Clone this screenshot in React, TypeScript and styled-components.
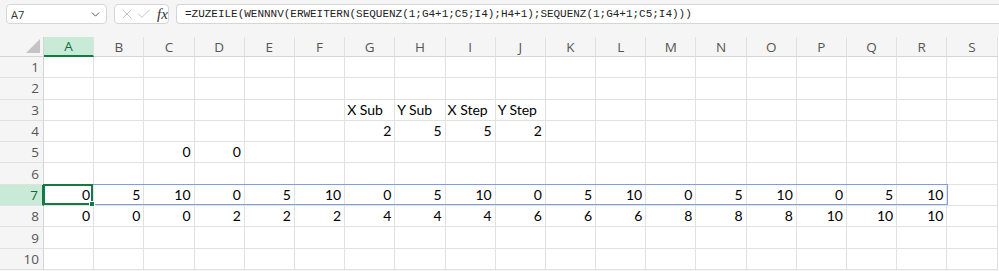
import React from 'react'
import styled, { createGlobalStyle, css } from 'styled-components'
import { X, Check, ChevronDown } from 'lucide-react'

const GlobalStyle = createGlobalStyle`
  html, body {
    margin: 0;
    padding: 0;
    background: #f5f5f5;
    overflow: hidden;
  }
`

const COLS = 'ABCDEFGHIJKLMNOPQRS'.split('')
const ROWS = [1, 2, 3, 4, 5, 6, 7, 8, 9, 10]
const COL_W = 50.2

// cell contents keyed by address
const data: Record<string, { v: string; left?: boolean }> = {
  G3: { v: 'X Sub', left: true },
  H3: { v: 'Y Sub', left: true },
  I3: { v: 'X Step', left: true },
  J3: { v: 'Y Step', left: true },
  G4: { v: '2' },
  H4: { v: '5' },
  I4: { v: '5' },
  J4: { v: '2' },
  C5: { v: '0' },
  D5: { v: '0' },
}
COLS.slice(0, 18).forEach((c, i) => {
  data[c + '7'] = { v: String((i % 3) * 5) }
  data[c + '8'] = { v: String(Math.floor(i / 3) * 2) }
})

const Page = styled.div`
  width: 999px;
  height: 271px;
  overflow: hidden;
  background: #f5f5f5;
`

const TopBar = styled.div`
  height: 37px;
  display: flex;
  align-items: flex-start;
  gap: 7px;
  padding: 4px 0 0 6px;
  box-sizing: border-box;
`

const Field = styled.div`
  height: 20px;
  box-sizing: border-box;
  border: 1px solid #d6d6d6;
  border-radius: 4px;
  background: #fff;
  display: flex;
  align-items: center;
`

const NameBox = styled(Field)`
  width: 101px;
  justify-content: space-between;
  padding: 0 4px 0 4px;
  font-family: 'Open Sans', 'Noto Sans', sans-serif;
  font-size: 11px;
  color: #333;
`

const ButtonBox = styled(Field)`
  width: 55px;
  padding: 0 0 0 4px;
  gap: 1px;
`

const FxLabel = styled.span`
  font-family: 'Liberation Serif', 'DejaVu Serif', serif;
  font-style: italic;
  font-size: 15px;
  color: #333;
  margin-left: 4px;
`

const FormulaBox = styled(Field)`
  flex: 1;
  border-right: none;
  border-radius: 4px 0 0 4px;
  padding-left: 8px;
  font-family: 'Liberation Mono', 'DejaVu Sans Mono', monospace;
  font-size: 11px;
  letter-spacing: -0.02px;
  color: #222;
  white-space: nowrap;
`

const Sheet = styled.div`
  display: grid;
  grid-template-columns: 44px repeat(19, ${COL_W}px);
  grid-template-rows: 20px repeat(10, 21.3px);
  background: #fff;
`

const Corner = styled.div`
  background: #f5f5f5;
  border-right: 1px solid #d4d4d4;
  border-bottom: 1px solid #d4d4d4;
  box-sizing: border-box;
  display: flex;
  align-items: flex-end;
  justify-content: flex-end;
  padding: 0 3px 3px 0;
`

const ColHead = styled.div<{ $active?: boolean }>`
  background: #f5f5f5;
  box-sizing: border-box;
  border-right: 1px solid #e1e1e1;
  border-bottom: 1px solid #d4d4d4;
  display: flex;
  align-items: center;
  justify-content: center;
  font-family: 'Open Sans', 'Noto Sans', sans-serif;
  font-size: 13.5px;
  color: #555;
  ${({ $active }) =>
    $active &&
    css`
      background: #caead8;
      color: #0f6b3a;
      border-bottom: 2px solid #107c41;
    `}
`

const RowHead = styled.div<{ $active?: boolean }>`
  background: #f5f5f5;
  box-sizing: border-box;
  border-right: 1px solid #d4d4d4;
  border-bottom: 1px solid #e1e1e1;
  display: flex;
  align-items: center;
  justify-content: flex-end;
  padding-right: 4px;
  font-family: 'Open Sans', 'Noto Sans', sans-serif;
  font-size: 13.5px;
  color: #555;
  ${({ $active }) =>
    $active &&
    css`
      background: #caead8;
      color: #0f6b3a;
      border-right: 2px solid #107c41;
    `}
`

const Cell = styled.div<{ $left?: boolean }>`
  position: relative;
  box-sizing: border-box;
  border-right: 1px solid #e1e1e1;
  border-bottom: 1px solid #e1e1e1;
  display: flex;
  align-items: flex-end;
  justify-content: ${({ $left }) => ($left ? 'flex-start' : 'flex-end')};
  padding: 0 3px 2px 2px;
  font-family: 'Lato', 'Open Sans', sans-serif;
  font-size: 14px;
  line-height: 16px;
  color: #000;
`

// blue outline of the spilled array A7:R7, anchored on its first cell
const SpillRange = styled.div<{ $span: number }>`
  position: absolute;
  left: -1px;
  top: -1px;
  width: ${({ $span }) => $span * COL_W + 1}px;
  height: calc(100% + 1px);
  box-sizing: border-box;
  border: 1px solid #7e9fdb;
  pointer-events: none;
  z-index: 1;
`

const ActiveCell = styled.div`
  position: absolute;
  left: -1px;
  top: -1px;
  width: calc(100% + 1px);
  height: calc(100% + 1px);
  box-sizing: border-box;
  border: 2px solid #107c41;
  pointer-events: none;
  z-index: 2;

  &::after {
    content: '';
    position: absolute;
    right: -4px;
    bottom: -4px;
    width: 6px;
    height: 6px;
    background: #107c41;
    border: 1px solid #fff;
    box-sizing: border-box;
  }
`

export default function App() {
  return (
    <Page>
      <GlobalStyle />
      <TopBar>
        <NameBox>
          <span>A7</span>
          <ChevronDown size={13} color="#444" strokeWidth={1.6} />
        </NameBox>
        <ButtonBox>
          <X size={16} color="#b8b8b8" strokeWidth={1.2} />
          <Check size={16} color="#b8b8b8" strokeWidth={1.2} />
          <FxLabel>fx</FxLabel>
        </ButtonBox>
        <FormulaBox>=ZUZEILE(WENNNV(ERWEITERN(SEQUENZ(1;G4+1;C5;I4);H4+1);SEQUENZ(1;G4+1;C5;I4)))</FormulaBox>
      </TopBar>
      <Sheet>
        <Corner>
          <svg width="14" height="14" viewBox="0 0 14 14">
            <polygon points="14,0 14,14 0,14" fill="#c4c4c4" />
          </svg>
        </Corner>
        {COLS.map((c) => (
          <ColHead key={c} $active={c === 'A'}>
            {c}
          </ColHead>
        ))}
        {ROWS.map((r) => (
          <React.Fragment key={r}>
            <RowHead $active={r === 7}>{r}</RowHead>
            {COLS.map((c) => {
              const d = data[c + r]
              const active = c === 'A' && r === 7
              return (
                <Cell key={c + r} $left={d?.left}>
                  {d?.v}
                  {active && <SpillRange $span={18} />}
                  {active && <ActiveCell />}
                </Cell>
              )
            })}
          </React.Fragment>
        ))}
      </Sheet>
    </Page>
  )
}
